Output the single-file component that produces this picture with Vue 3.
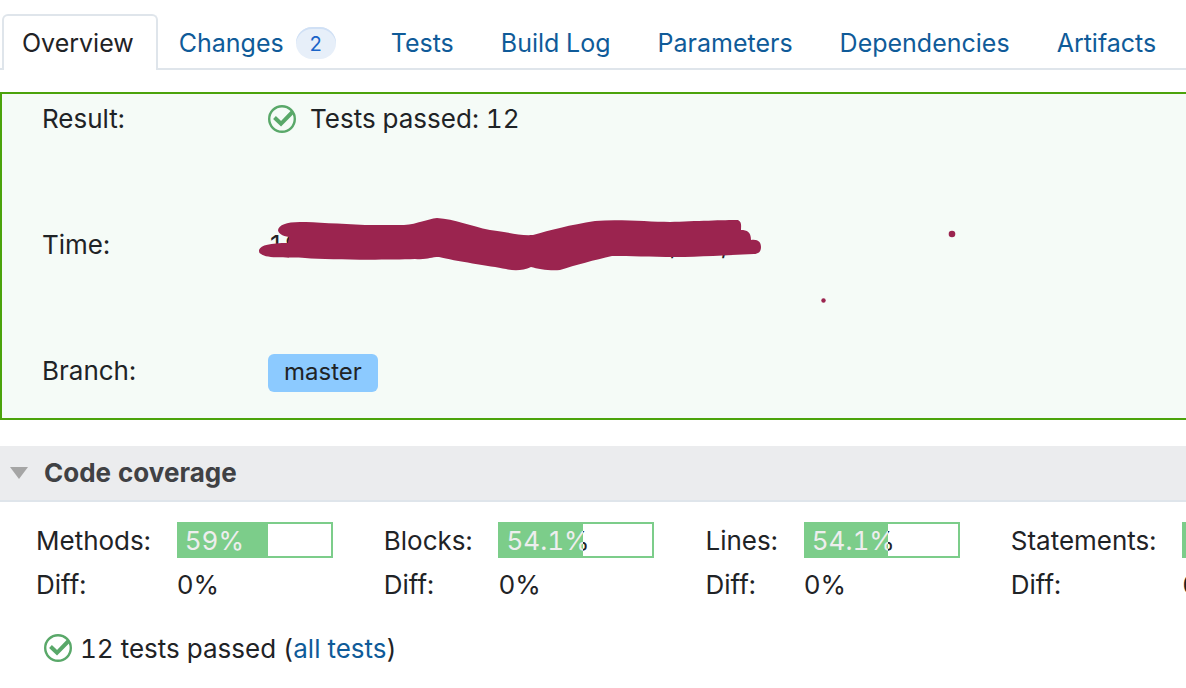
<script setup>
import { ref } from 'vue'

const tabs = [
  { name: 'Overview' },
  { name: 'Changes', count: 2 },
  { name: 'Tests' },
  { name: 'Build Log' },
  { name: 'Parameters' },
  { name: 'Dependencies' },
  { name: 'Artifacts' },
]
const active = ref('Overview')

const coverage = [
  { label: 'Methods:', value: 59, diff: '0%' },
  { label: 'Blocks:', value: 54.1, diff: '0%' },
  { label: 'Lines:', value: 54.1, diff: '0%' },
  { label: 'Statements:', value: 54.1, diff: '0%' },
]
const expanded = ref(true)
</script>

<template>
  <div class="build-page">
    <nav class="tabs">
      <a
        v-for="tab in tabs"
        :key="tab.name"
        href="#"
        class="tab"
        :class="{ active: tab.name === active }"
        @click.prevent="active = tab.name"
      >
        {{ tab.name }}<span v-if="tab.count" class="count">{{ tab.count }}</span>
      </a>
    </nav>

    <dl class="summary">
      <div class="row">
        <dt>Result:</dt>
        <dd>
          <svg class="status-icon" viewBox="0 0 28 28">
            <circle cx="14" cy="14" r="12.8" />
            <path d="M6.5 12.5 13 18.8 24.5 7" />
          </svg>
          <span class="status-text">Tests passed: 12</span>
        </dd>
      </div>
      <div class="row">
        <dt>Time:</dt>
        <dd class="time">
          <span>19</span>
          <span class="marks"><span>,</span><span>,</span></span>
          <svg class="redaction" viewBox="0 0 720 100">
            <path
              d="M19 40C21 35 30 33 48 33C48 31 49 29 49 27C42 26 38 23 38 20C39 15 46 12 60 12C75 12 100 14 125 15H164C178 14 187 9 197 8C215 9 230 16 250 20C268 22 279 26 293 25C310 20 330 15 355 11C380 9 410 12 430 12C455 11 485 10 498 10C502 12 501 16 501 20C507 20 511 22 511 30C518 29 521 32 521 37C521 42 518 44 514 44C485 45 460 47 435 47C410 47 390 46 372 46C355 50 335 55 320 60C310 61 298 59 291 57C283 61 273 61 266 59C250 56 215 51 199 47C190 47 188 50 175 49C145 50 90 50 65 48C50 47 27 49 21 44C19 43 19 42 19 40Z"
            />
            <circle cx="712" cy="24" r="3.3" />
            <circle cx="583.5" cy="90.5" r="2.2" />
          </svg>
        </dd>
      </div>
      <div class="row">
        <dt>Branch:</dt>
        <dd><span class="branch">master</span></dd>
      </div>
    </dl>

    <section class="coverage">
      <h2>
        <button type="button" class="toggle" :aria-expanded="expanded" @click="expanded = !expanded">
          <svg class="arrow" viewBox="0 0 18 12"><path d="M0 0h18L9 12z" /></svg>
          Code coverage
        </button>
      </h2>
      <table v-if="expanded">
        <tbody>
          <tr>
            <template v-for="item in coverage" :key="item.label">
              <th scope="row">{{ item.label }}</th>
              <td class="bar-cell">
                <div class="bar">
                  {{ item.value }}%
                  <div class="fill" :style="{ width: item.value + '%' }" aria-hidden="true">{{ item.value }}%</div>
                </div>
              </td>
            </template>
          </tr>
          <tr>
            <template v-for="item in coverage" :key="item.label">
              <th scope="row">Diff:</th>
              <td>{{ item.diff }}</td>
            </template>
          </tr>
        </tbody>
      </table>
    </section>

    <p class="tests">
      <svg class="status-icon" viewBox="0 0 28 28">
        <circle cx="14" cy="14" r="12.8" />
        <path d="M6.5 12.5 13 18.8 24.5 7" />
      </svg>
      <span class="tests-text">12 tests passed (<a href="#">all tests</a>)</span>
    </p>
  </div>
</template>

<style>
body {
  margin: 0;
  background: #fff;
}
</style>

<style scoped>
.build-page {
  overflow: hidden;
  padding-top: 14px;
  color: #1f2326;
  font-family: Inter, 'Liberation Sans', sans-serif;
  font-size: 26px;
  font-variant-numeric: tabular-nums;
  line-height: 36px;
  white-space: nowrap;
}
a {
  color: #0f5b99;
  text-decoration: none;
}
.tabs {
  display: flex;
  padding-left: 2px;
  box-shadow: inset 0 -2px #dfe5eb;
  font-size: 25px;
}
.tab {
  display: flex;
  align-items: center;
  box-sizing: border-box;
  height: 56px;
  padding: 2px 26px 0 21px;
}
.tab.active {
  padding: 0 22px 0 18px;
  border: 2px solid #dfe5eb;
  border-bottom: 0;
  border-radius: 6px 6px 0 0;
  background: #fff;
  color: #1f2326;
}
.count {
  width: 40px;
  height: 32px;
  margin: 0 8px 0 12px;
  border-radius: 16px;
  box-shadow: inset 0 2px #d0e0f5;
  background: #e7eff9;
  color: #1a64c8;
  font-size: 20px;
  line-height: 34px;
  text-align: center;
}
.summary {
  display: flex;
  flex-direction: column;
  gap: 88px;
  margin: 22px 0 26px;
  padding: 6px 0 28px 40px;
  border: 2px solid #4ba30b;
  border-right: 0;
  background: #f5fbf7;
}
.row {
  display: flex;
  height: 38px;
  align-items: baseline;
  line-height: 38px;
}
dt {
  width: 226px;
}
dd {
  display: flex;
  align-items: baseline;
  margin: 0;
}
.status-icon {
  flex: none;
  align-self: center;
  width: 28px;
  height: 28px;
  fill: none;
  stroke: #59a869;
  stroke-width: 2.4;
}
.status-icon path {
  stroke-width: 4;
}
.status-text {
  margin-left: 14px;
}
.time {
  position: relative;
}
.marks {
  display: flex;
  gap: 44px;
  margin-left: 368px;
}
/* starts 28px left of the value and lies over it */
.redaction {
  position: absolute;
  top: -16px;
  left: -28px;
  width: 720px;
  height: 100px;
  fill: #9b244f;
}
.branch {
  padding: 0 16px 2px;
  border-radius: 6px;
  background: #8ccaff;
  font-size: 24px;
  line-height: 36px;
}
h2 {
  margin: 0;
  border-bottom: 2px solid #dfe5eb;
  background: #ebecee;
}
.toggle {
  display: flex;
  align-items: center;
  gap: 16px;
  width: 100%;
  height: 54px;
  padding: 0 10px;
  border: 0;
  background: none;
  color: #404144;
  font: inherit;
  font-size: 26px;
  font-weight: 700;
}
.arrow {
  width: 18px;
  height: 12px;
  fill: #a5a5a5;
}
table {
  margin: 16px 0 0 36px;
  border-collapse: collapse;
}
th,
td {
  padding: 5px 0 3px;
  text-align: left;
  font-weight: 400;
  vertical-align: top;
}
th {
  padding-right: 26px;
}
.bar-cell {
  padding: 4px 51px 4px 0;
}
.bar {
  position: relative;
  box-sizing: border-box;
  width: 156px;
  height: 36px;
  padding-left: 6px;
  border: 2px solid #7ccd8a;
  line-height: 34px;
}
.fill {
  position: absolute;
  top: 0;
  left: 0;
  box-sizing: border-box;
  height: 100%;
  padding-left: 6px;
  overflow: hidden;
  background: #7ccd8a;
  color: #eee;
}
.tests {
  display: flex;
  align-items: center;
  gap: 8px;
  margin: 23px 0 0 44px;
}
.tests-text {
  padding-top: 2px;
}
</style>
